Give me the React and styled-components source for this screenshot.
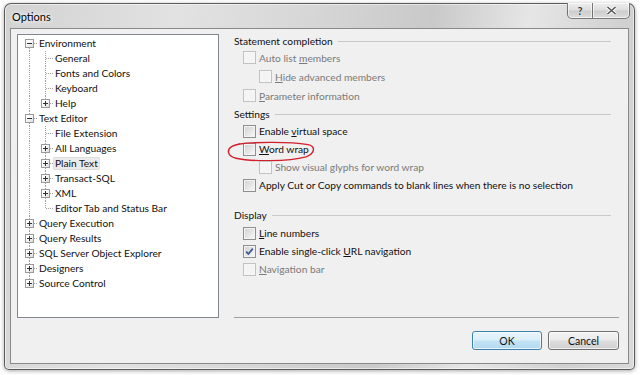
import React from "react";
import styled, { createGlobalStyle } from "styled-components";

const FONT = `"Lato", "Liberation Sans", sans-serif`;

const GlobalStyle = createGlobalStyle`
  body {
    margin: 0;
    background: #fff;
    font-family: ${FONT};
    font-size: 10.2px;
    color: #111;
  }
`;

const Page = styled.div`
  width: 640px;
  height: 375px;
  box-sizing: border-box;
  padding: 3px 0 0 4px;
  overflow: hidden;
`;

const Window = styled.div`
  width: 631px;
  height: 367px;
  box-sizing: border-box;
  border: 1px solid rgba(50, 50, 50, 0.75);
  border-radius: 7px 7px 5px 5px;
  background: linear-gradient(
    100deg,
    #d2d2d2 0%,
    #e2e2e2 25%,
    #d6d6d6 45%,
    #c9c9c9 62%,
    #e6e6e6 76%,
    #d0d0d0 90%,
    #dadada 100%
  );
  box-shadow: 0 1px 4px rgba(0, 0, 0, 0.35),
    inset 0 0 0 1px rgba(255, 255, 255, 0.55);
  padding: 0 5px 5px;
  display: flex;
  flex-direction: column;
`;

const TitleBar = styled.div`
  height: 24px;
  display: flex;
  align-items: center;
  flex: none;
`;

const Title = styled.span`
  margin-left: 2px;
  font-size: 11px;
  color: #000;
  text-shadow: 0 0 6px #fff, 0 0 3px #fff;
`;

const CaptionButtons = styled.div`
  display: flex;
  align-self: flex-start;
  margin: -1px -1px 0 auto;
`;

const CapButton = styled.div`
  width: ${(p) => p.$w}px;
  height: 16px;
  box-sizing: border-box;
  border: 1px solid rgba(60, 60, 60, 0.65);
  border-top: none;
  border-left: ${(p) => (p.$side === "right" ? "none" : "1px solid rgba(60,60,60,0.65)")};
  border-radius: ${(p) => (p.$side === "right" ? "0 0 5px 0" : "0 0 0 5px")};
  background: linear-gradient(#eeeeee 0%, #dedede 45%, #cdcdcd 55%, #dcdcdc 100%);
  box-shadow: inset 0 0 0 1px rgba(255, 255, 255, 0.6);
  display: flex;
  align-items: center;
  justify-content: center;
  color: #3a3a3a;
  font-weight: bold;
  font-size: 11px;
  text-shadow: 0 0 2px #fff;
`;

const Client = styled.div`
  flex: 1;
  border: 1px solid #8a8a8a;
  background: #f0f0f0;
  display: grid;
  grid-template-columns: 202px 1fr;
  grid-template-rows: 284px auto;
  column-gap: 15px;
  row-gap: 13px;
  padding: 5px 9px 0 6px;
`;

/* ---------- tree ---------- */

const Tree = styled.div`
  background: #fff;
  border: 1px solid #828790;
  box-sizing: border-box;
  padding: 1px 0 0 3px;
`;

const TreeRow = styled.div`
  display: flex;
  height: 15px;
`;

const Cell = styled.div`
  width: 16px;
  flex: none;
  position: relative;

  &::before {
    content: "";
    display: ${(p) => (p.$v === "none" ? "none" : "block")};
    position: absolute;
    left: 8px;
    top: ${(p) => (p.$v === "bottom" ? 7 : 0)}px;
    bottom: ${(p) => (p.$v === "top" ? 8 : 0)}px;
    border-left: 1px dotted #a0a0a0;
  }

  &::after {
    content: "";
    display: ${(p) => (p.$h ? "block" : "none")};
    position: absolute;
    left: 9px;
    right: 0;
    top: 7px;
    border-top: 1px dotted #a0a0a0;
  }
`;

const ExpandBox = styled.span`
  position: absolute;
  left: 4px;
  top: 3px;
  width: 9px;
  height: 9px;
  box-sizing: border-box;
  border: 1px solid #9a9a9a;
  background: linear-gradient(135deg, #ffffff 30%, #dcdcdc 100%);
  z-index: 1;
  display: flex;
  align-items: center;
  justify-content: center;
`;

const TreeLabel = styled.span`
  align-self: center;
  line-height: 13px;
  padding: 0 2px;
  white-space: nowrap;
  color: #111;
  background: ${(p) => (p.$selected ? "#ebebeb" : "transparent")};
  border-radius: 2px;
  box-shadow: ${(p) => (p.$selected ? "inset 0 0 0 1px #dedede" : "none")};
`;

const Sign = ({ plus }) => (
  <svg width="5" height="5" viewBox="0 0 5 5">
    <rect x="0" y="2" width="5" height="1" fill="#2f2f2f" />
    {plus && <rect x="2" y="0" width="1" height="5" fill="#2f2f2f" />}
  </svg>
);

const child = (label, extra = {}) => ({
  label,
  cells: [{ v: "full" }, { v: extra.last ? "top" : "full", h: true, box: extra.box }],
  selected: extra.selected,
});

const root = (label, v, box) => ({ label, cells: [{ v, h: true, box }] });

const TREE = [
  root("Environment", "bottom", "minus"),
  child("General"),
  child("Fonts and Colors"),
  child("Keyboard"),
  child("Help", { last: true, box: "plus" }),
  root("Text Editor", "full", "minus"),
  child("File Extension"),
  child("All Languages", { box: "plus" }),
  child("Plain Text", { box: "plus", selected: true }),
  child("Transact-SQL", { box: "plus" }),
  child("XML", { box: "plus" }),
  child("Editor Tab and Status Bar", { last: true }),
  root("Query Execution", "full", "plus"),
  root("Query Results", "full", "plus"),
  root("SQL Server Object Explorer", "full", "plus"),
  root("Designers", "full", "plus"),
  root("Source Control", "top", "plus"),
];

/* ---------- settings ---------- */

const Panel = styled.div`
  display: flex;
  flex-direction: column;
`;

const GroupHeader = styled.div`
  height: 14px;
  margin-top: ${(p) => p.$mt || 0}px;
  margin-right: 8px;
  display: flex;
  align-items: center;
  gap: 5px;
  color: #111;
  white-space: nowrap;

  &::after {
    content: "";
    flex: 1;
    border-top: 1px solid #c8c8c8;
    margin-top: 1px;
  }
`;

const Group = styled.div`
  display: flex;
  flex-direction: column;
  margin-top: ${(p) => p.$mt || 0}px;
`;

const Row = styled.div`
  height: ${(p) => p.$h}px;
  padding-left: ${(p) => p.$indent}px;
  display: flex;
  align-items: center;
  gap: 3px;
  position: relative;
  color: ${(p) => (p.$disabled ? "#7a7a7a" : "#111")};
  white-space: nowrap;
`;

const Box = styled.span`
  width: 13px;
  height: 13px;
  box-sizing: border-box;
  flex: none;
  border: 1px solid ${(p) => (p.$disabled ? "#c2c2c2" : "#8e8f8f")};
  background: ${(p) =>
    p.$disabled
      ? "#f4f4f4"
      : "linear-gradient(135deg, #cfd1d4 0%, #e6e6e6 55%, #fbfbfb 100%)"};
  box-shadow: inset 0 0 0 1px ${(p) => (p.$disabled ? "#f7f7f7" : "#f4f4f4")};
  display: flex;
  align-items: center;
  justify-content: center;
`;

const Key = styled.span`
  text-decoration: underline;
  text-underline-offset: 1px;
`;

const Circle = styled.svg`
  position: absolute;
  left: -8px;
  top: 1px;
  pointer-events: none;
`;

const Separator = styled.div`
  margin-top: auto;
  border-top: 1px solid #a0a0a0;
`;

const Buttons = styled.div`
  grid-column: 1 / -1;
  justify-self: end;
  display: flex;
  gap: 6px;
`;

const Button = styled.button`
  width: ${(p) => p.$w}px;
  height: 19px;
  padding: 0;
  font-family: ${FONT};
  font-size: 10.5px;
  color: #111;
  border-radius: 3px;
  border: 1px solid ${(p) => (p.$primary ? "#3c7fb1" : "#707070")};
  background: ${(p) =>
    p.$primary
      ? "linear-gradient(#e9f5fc 0%, #dbeffa 48%, #c3e3f5 52%, #b3d9f0 100%)"
      : "linear-gradient(#f3f3f3 0%, #ebebeb 48%, #dddddd 52%, #cfcfcf 100%)"};
  box-shadow: inset 0 0 0 1px rgba(255, 255, 255, 0.7);
`;

const Check = ({ checked, disabled }) => (
  <Box $disabled={disabled}>
    {checked && (
      <svg width="9" height="9" viewBox="0 0 9 9">
        <path d="M1.2 4.6 L3.4 7 L7.8 1.6" fill="none" stroke="#3a5795" strokeWidth="1.7" />
      </svg>
    )}
  </Box>
);

const Option = ({ h, indent = 9, disabled, checked, children, mark }) => (
  <Row $h={h} $indent={indent} $disabled={disabled}>
    <Check checked={checked} disabled={disabled} />
    <span>{children}</span>
    {mark && (
      <Circle width="90" height="21" viewBox="0 0 90 21">
        <path
          d="M12 3.2 C30 0.6 64 0.8 82 3.6 C90 5.2 89 12.6 80 15.8 C62 20.8 26 20.6 10 17.2 C1 15.2 0.6 8.4 6 5.4 C8 4.2 11 3.4 14 3"
          fill="none"
          stroke="#d31e2b"
          strokeWidth="1.4"
        />
      </Circle>
    )}
  </Row>
);

export default function App() {
  return (
    <Page>
      <GlobalStyle />
      <Window>
        <TitleBar>
          <Title>Options</Title>
          <CaptionButtons>
            <CapButton $w={26} $side="left">?</CapButton>
            <CapButton $w={37} $side="right">
              <svg width="11" height="9" viewBox="0 0 11 9">
                <path d="M1.5 1 L9.5 8 M9.5 1 L1.5 8" stroke="#fff" strokeWidth="3.4" />
                <path d="M1.5 1 L9.5 8 M9.5 1 L1.5 8" stroke="#555" strokeWidth="1.6" />
              </svg>
            </CapButton>
          </CaptionButtons>
        </TitleBar>

        <Client>
          <Tree>
            {TREE.map((item) => (
              <TreeRow key={item.label}>
                {item.cells.map((c, i) => (
                  <Cell key={i} $v={c.v} $h={c.h}>
                    {c.box && (
                      <ExpandBox>
                        <Sign plus={c.box === "plus"} />
                      </ExpandBox>
                    )}
                  </Cell>
                ))}
                <TreeLabel $selected={item.selected}>{item.label}</TreeLabel>
              </TreeRow>
            ))}
          </Tree>

          <Panel>
            <GroupHeader>Statement completion</GroupHeader>
            <Group>
              <Option h={19} disabled>
                Auto list <Key>m</Key>embers
              </Option>
              <Option h={19} indent={25} disabled>
                <Key>H</Key>ide advanced members
              </Option>
              <Option h={19} disabled>
                <Key>P</Key>arameter information
              </Option>
            </Group>

            <GroupHeader $mt={2}>Settings</GroupHeader>
            <Group $mt={1}>
              <Option h={18}>
                Enable <Key>v</Key>irtual space
              </Option>
              <Option h={18} mark>
                <Key>W</Key>ord wrap
              </Option>
              <Option h={18} indent={25} disabled>
                Show visual glyphs for word wrap
              </Option>
              <Option h={18}>
                Apply Cut or Copy commands to blank lines when there is no selection
              </Option>
            </Group>

            <GroupHeader $mt={14}>Display</GroupHeader>
            <Group $mt={2}>
              <Option h={18}>
                <Key>L</Key>ine numbers
              </Option>
              <Option h={18} checked>
                Enable single-click <Key>U</Key>RL navigation
              </Option>
              <Option h={18} disabled>
                <Key>N</Key>avigation bar
              </Option>
            </Group>

            <Separator />
          </Panel>

          <Buttons>
            <Button $w={70} $primary>OK</Button>
            <Button $w={71}>Cancel</Button>
          </Buttons>
        </Client>
      </Window>
    </Page>
  );
}
